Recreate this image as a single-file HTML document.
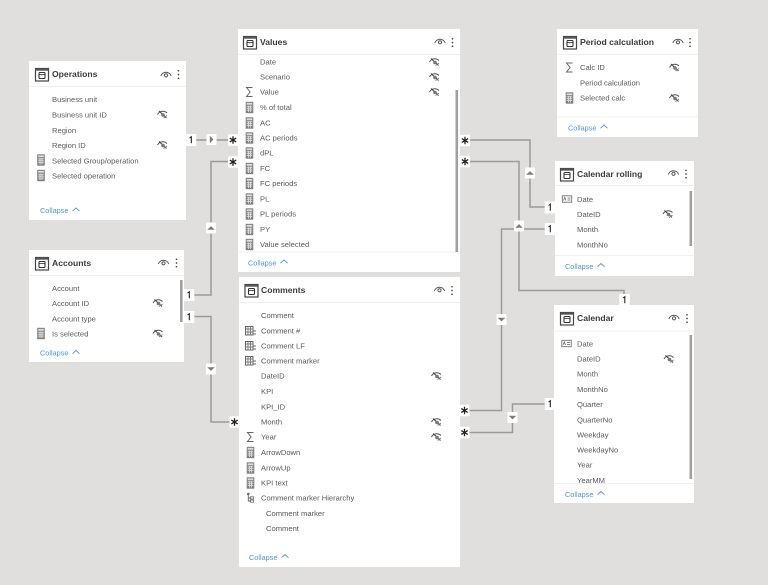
<!DOCTYPE html>
<html><head><meta charset="utf-8"><title>Model view</title>
<style>
html,body{margin:0;padding:0;background:#e1dfdd;width:768px;height:585px;overflow:hidden}
svg{display:block;filter:blur(.35px)}
text{font-family:"Liberation Sans",sans-serif;font-size:7.6px;fill:#5a5a5a}
.t{font-size:8.6px;font-weight:bold;fill:#3c3c3c}
.c{fill:#4f95d6;font-size:7.3px}
.l{fill:none;stroke:#9a9a9a;stroke-width:1.5}
.b{fill:#fff}
.d{fill:#f1f0ef}
.sb{fill:#a0a0a0}
</style></head><body>
<svg width="768" height="585" viewBox="0 0 768 585" xmlns="http://www.w3.org/2000/svg">
<defs>
<g id="eye"><path d="M-5.2 2A5.5 5.5 0 0 1 5.2 2" fill="none" stroke="#555" stroke-width="1"/><circle cx="0" cy="1.3" r="1.6" fill="none" stroke="#555" stroke-width="1"/></g>
<g id="hide"><path d="M-5 0A6 6 0 0 1 4.5 -1.5" fill="none" stroke="#555" stroke-width="1"/><path d="M-3.5 -3.5L4 3.5" stroke="#444" stroke-width="1.1"/><circle cx=".5" cy=".5" r="1.8" fill="#777"/><path d="M1 3.5L4.5 1" stroke="#777" stroke-width=".9"/></g>
<g id="dots"><circle cy="-3.7" r=".85" fill="#444"/><circle r=".85" fill="#444"/><circle cy="3.7" r=".85" fill="#444"/></g>
<g id="tbl"><rect x="-6.5" y="-6" width="13" height="12.5" fill="#fff" stroke="#444" stroke-width="1.2"/><rect x="-6.5" y="-6" width="13" height="2.2" fill="#555"/><rect x="-3" y="-2" width="6" height="6" rx="1" fill="none" stroke="#333" stroke-width="1.1"/><path d="M-3 0H3" stroke="#333" stroke-width=".8"/></g>
<g id="calc"><rect x="-3.8" y="-5.7" width="7.6" height="11.4" fill="#808080"/><rect x="-2.8" y="-4.6" width="5.6" height="1.8" fill="#ddd"/><path d="M-2.8 -1.2H2.8M-2.8 .7H2.8M-2.8 2.6H2.8M-1 -2V4.5M1 -2V4.5" stroke="#ddd" stroke-width=".9"/></g>
<g id="sig"><path d="M3 -4.5H-3L.6 0L-3 4.5H3" fill="none" stroke="#666" stroke-width="1"/></g>
<g id="col"><rect x="-5" y="-4.5" width="7.5" height="8.5" fill="#fff" stroke="#666" stroke-width="1"/><path d="M-5 -2H2.5M-5 1H2.5M-2.5 -4.5V4M0 -4.5V4" stroke="#777" stroke-width=".9"/><path d="M3 0H5.5M3 3H5.5" stroke="#666" stroke-width=".9"/></g>
<g id="dat"><rect x="-4.7" y="-3.2" width="9.4" height="6.4" fill="#fff" stroke="#777" stroke-width=".9"/><path d="M-3.5 1.5L-2.2 -1.6L-1 1.5M.5 -1H3.5M.5 1H3.5" fill="none" stroke="#666" stroke-width=".8"/></g>
<g id="hier"><circle cx="-2.2" cy="-4" r="1.4" fill="#777"/><path d="M-2.2 -3V3H0M-2.2 0H0" fill="none" stroke="#666" stroke-width=".9"/><rect x="0" y="-1.2" width="3" height="2.2" fill="none" stroke="#666" stroke-width=".8"/><rect x="0" y="2" width="3" height="2.2" fill="none" stroke="#666" stroke-width=".8"/></g>
<g id="up"><rect x="-5" y="-5.5" width="10" height="11" rx=".8" fill="#fff"/><path d="M-3.8 1.7L0 -1.9L3.8 1.7Z" fill="#7c7c7c"/></g>
<g id="dn"><rect x="-5" y="-5.5" width="10" height="11" rx=".8" fill="#fff"/><path d="M-3.8 -1.7L0 1.9L3.8 -1.7Z" fill="#7c7c7c"/></g>
<g id="rt"><rect x="-5" y="-5.5" width="10" height="11" rx=".8" fill="#fff"/><path d="M-1.7 -3.7L1.9 0L-1.7 3.7Z" fill="#7c7c7c"/></g>
<g id="star"><rect x="-5" y="-5.8" width="10" height="11.6" rx=".8" fill="#fff"/><path d="M0 -3.7V3.7M-3.2 -1.9L3.2 1.9M-3.2 1.9L3.2 -1.9" stroke="#222" stroke-width="1.3"/></g>
<g id="one"><rect x="-5.3" y="-6" width="10.6" height="12" rx=".8" fill="#fff"/><path d="M-1.4 -2L.3 -3.3V3.3" fill="none" stroke="#222" stroke-width="1.1"/></g>
<path id="chev" d="M1.5 3.2L5 0L8.5 3.2" fill="none" stroke="#4f95d6" stroke-width=".9"/>
</defs>

<rect width="768" height="585" fill="#e1dfdd"/>

<!-- connectors -->
<path class="l" d="M186 140H238"/>
<path class="l" d="M238 161.5H211V295H190"/>
<path class="l" d="M190 316.5H211V422H236"/>
<path class="l" d="M462 140H530V207H550"/>
<path class="l" d="M462 161.5H519V290.5H624V300"/>
<path class="l" d="M550 229H501.5V410.5H462"/>
<path class="l" d="M550 404H512.5V432.5H462"/>

<!-- Operations -->
<rect class="b" x="29" y="61" width="157" height="159"/>
<rect class="d" x="29" y="86" width="157" height="1"/>
<use href="#tbl" x="42" y="74.5"/><text class="t" x="52" y="77">Operations</text>
<use href="#eye" x="166" y="74"/><use href="#dots" x="178.5" y="74.5"/>
<text x="52" y="102.2">Business unit</text>
<text x="52" y="117.7">Business unit ID</text><use href="#hide" x="162.5" y="114.5"/>
<text x="52" y="133">Region</text>
<text x="52" y="148">Region ID</text><use href="#hide" x="162.5" y="145"/>
<use href="#calc" x="41" y="160"/><text x="52" y="163.7">Selected Group/operation</text>
<use href="#calc" x="41" y="175.5"/><text x="52" y="178.7">Selected operation</text>
<text class="c" x="40" y="213">Collapse</text><use href="#chev" x="71" y="208"/>

<!-- Accounts -->
<rect class="b" x="29" y="250" width="155" height="112"/>
<rect class="d" x="29" y="275" width="155" height="1"/>
<use href="#tbl" x="42" y="263.5"/><text class="t" x="52" y="266">Accounts</text>
<use href="#eye" x="163.5" y="262"/><use href="#dots" x="176.5" y="263"/>
<text x="52" y="291">Account</text>
<text x="52" y="306">Account ID</text><use href="#hide" x="158" y="303"/>
<text x="52" y="321.3">Account type</text>
<use href="#calc" x="41" y="333.5"/><text x="52" y="336.7">Is selected</text><use href="#hide" x="158" y="333.5"/>
<rect class="sb" x="180" y="280" width="2.6" height="42"/>
<text class="c" x="40" y="355.7">Collapse</text><use href="#chev" x="71" y="350.5"/>

<!-- Values -->
<rect class="b" x="238" y="29" width="222" height="243"/>
<rect class="d" x="238" y="54" width="222" height="1"/>
<use href="#tbl" x="250" y="42.5"/><text class="t" x="260" y="45">Values</text>
<use href="#eye" x="440" y="41"/><use href="#dots" x="452.5" y="42.5"/>
<text x="260" y="64.7">Date</text><use href="#hide" x="434.5" y="62"/>
<text x="260" y="79.7">Scenario</text><use href="#hide" x="434.5" y="77"/>
<use href="#sig" x="249.5" y="92"/><text x="260" y="94.7">Value</text><use href="#hide" x="434.5" y="92"/>
<use href="#calc" x="249.5" y="107.5"/><text x="260" y="110.2">% of total</text>
<use href="#calc" x="249.5" y="123"/><text x="260" y="125.7">AC</text>
<use href="#calc" x="249.5" y="138"/><text x="260" y="140.7">AC periods</text>
<use href="#calc" x="249.5" y="153"/><text x="260" y="155.7">dPL</text>
<use href="#calc" x="249.5" y="168.5"/><text x="260" y="171.2">FC</text>
<use href="#calc" x="249.5" y="183.5"/><text x="260" y="186.2">FC periods</text>
<use href="#calc" x="249.5" y="199"/><text x="260" y="201.7">PL</text>
<use href="#calc" x="249.5" y="214"/><text x="260" y="216.7">PL periods</text>
<use href="#calc" x="249.5" y="229.5"/><text x="260" y="232.2">PY</text>
<use href="#calc" x="249.5" y="244.5"/><text x="260" y="247.2">Value selected</text>
<rect class="d" x="238" y="251.5" width="222" height="1"/>
<rect class="sb" x="455.5" y="90" width="2.6" height="162"/>
<text class="c" x="248" y="265.5">Collapse</text><use href="#chev" x="279" y="260"/>

<!-- Comments -->
<rect class="b" x="239" y="277" width="221" height="290"/>
<rect class="d" x="239" y="302" width="221" height="1"/>
<use href="#tbl" x="251.5" y="290.5"/><text class="t" x="261" y="293">Comments</text>
<use href="#eye" x="439.5" y="289"/><use href="#dots" x="452" y="290.5"/>
<text x="261" y="318.2">Comment</text>
<use href="#col" x="250.5" y="331"/><text x="261" y="333.7">Comment #</text>
<use href="#col" x="250.5" y="346"/><text x="261" y="348.7">Comment LF</text>
<use href="#col" x="250.5" y="361"/><text x="261" y="363.7">Comment marker</text>
<text x="261" y="378.7">DateID</text><use href="#hide" x="436.5" y="376"/>
<text x="261" y="394.2">KPI</text>
<text x="261" y="409.7">KPI_ID</text>
<text x="261" y="424.7">Month</text><use href="#hide" x="436.5" y="422"/>
<use href="#sig" x="250.5" y="437"/><text x="261" y="439.7">Year</text><use href="#hide" x="436.5" y="437"/>
<use href="#calc" x="250.5" y="452.5"/><text x="261" y="455.2">ArrowDown</text>
<use href="#calc" x="250.5" y="468"/><text x="261" y="470.7">ArrowUp</text>
<use href="#calc" x="250.5" y="483"/><text x="261" y="485.7">KPI text</text>
<use href="#hier" x="250.5" y="498"/><text x="261" y="500.7">Comment marker Hierarchy</text>
<text x="266" y="516.2">Comment marker</text>
<text x="266" y="531.2">Comment</text>
<text class="c" x="249" y="560">Collapse</text><use href="#chev" x="280" y="554.5"/>

<!-- Period calculation -->
<rect class="b" x="557" y="29" width="141" height="108"/>
<rect class="d" x="557" y="54" width="141" height="1"/>
<use href="#tbl" x="570" y="42.5"/><text class="t" x="580" y="45">Period calculation</text>
<use href="#eye" x="678" y="41"/><use href="#dots" x="690" y="42.5"/>
<use href="#sig" x="569.5" y="67.5"/><text x="580" y="70.2">Calc ID</text><use href="#hide" x="674.5" y="67.5"/>
<text x="580" y="85.7">Period calculation</text>
<use href="#calc" x="569.5" y="98"/><text x="580" y="100.7">Selected calc</text><use href="#hide" x="674.5" y="98"/>
<rect class="d" x="557" y="116.5" width="141" height="1"/>
<text class="c" x="568" y="130.5">Collapse</text><use href="#chev" x="599" y="125"/>

<!-- Calendar rolling -->
<rect class="b" x="555" y="161" width="139" height="115"/>
<rect class="d" x="555" y="185" width="139" height="1"/>
<use href="#tbl" x="567" y="174.5"/><text class="t" x="577" y="177">Calendar rolling</text>
<use href="#eye" x="673.5" y="172.5"/><use href="#dots" x="686" y="174"/>
<use href="#dat" x="567" y="199"/><text x="577" y="202">Date</text>
<text x="577" y="217">DateID</text><use href="#hide" x="668" y="214"/>
<text x="577" y="232.2">Month</text>
<text x="577" y="247.7">MonthNo</text>
<rect class="d" x="555" y="255" width="139" height="1"/>
<rect class="sb" x="689.5" y="191" width="2.6" height="55"/>
<text class="c" x="565" y="269">Collapse</text><use href="#chev" x="596" y="263.5"/>

<!-- Calendar -->
<rect class="b" x="554" y="305" width="140" height="198"/>
<rect class="d" x="554" y="330.5" width="140" height="1"/>
<use href="#tbl" x="567" y="318.5"/><text class="t" x="577" y="321">Calendar</text>
<use href="#eye" x="674" y="317"/><use href="#dots" x="687" y="318.5"/>
<use href="#dat" x="566.5" y="343.5"/><text x="577" y="346.7">Date</text>
<text x="577" y="361.7">DateID</text><use href="#hide" x="669" y="359"/>
<text x="577" y="376.7">Month</text>
<text x="577" y="392.2">MonthNo</text>
<text x="577" y="407.2">Quarter</text>
<text x="577" y="422.7">QuarterNo</text>
<text x="577" y="437.7">Weekday</text>
<text x="577" y="452.7">WeekdayNo</text>
<text x="577" y="467.7">Year</text>
<text x="577" y="483.2">YearMM</text>
<rect class="b" x="554" y="483.5" width="140" height="19.5"/>
<rect class="d" x="554" y="483" width="140" height="1"/>
<rect class="sb" x="689.5" y="335" width="2.6" height="144"/>
<text class="c" x="565" y="497">Collapse</text><use href="#chev" x="596" y="491.5"/>

<!-- connector badges -->
<use href="#one" x="191" y="140"/><use href="#rt" x="211.5" y="139.5"/><use href="#star" x="233" y="140"/>
<use href="#star" x="233" y="162"/><use href="#up" x="211" y="228"/><use href="#one" x="189" y="295"/>
<use href="#one" x="189" y="317"/><use href="#dn" x="211" y="369"/><use href="#star" x="234.5" y="422"/>
<use href="#star" x="465" y="140.5"/><use href="#up" x="530" y="173"/><use href="#one" x="550" y="207.5"/>
<use href="#star" x="465" y="161.5"/><use href="#up" x="519" y="226"/><use href="#one" x="624.5" y="300"/>
<use href="#one" x="550" y="229"/><use href="#dn" x="501.5" y="319.5"/><use href="#star" x="464.5" y="410.5"/>
<use href="#one" x="550" y="404"/><use href="#dn" x="512.5" y="417.5"/><use href="#star" x="464.5" y="432.5"/>
</svg>
</body></html>
